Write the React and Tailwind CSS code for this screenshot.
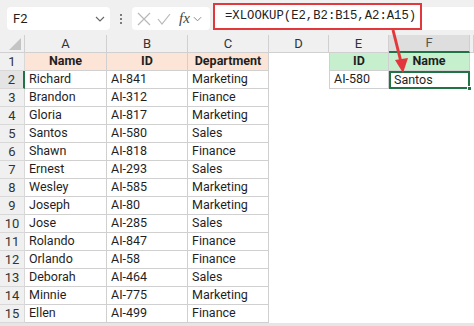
import React from "react";

const rows = [
  ["Richard", "AI-841", "Marketing"],
  ["Brandon", "AI-312", "Finance"],
  ["Gloria", "AI-817", "Marketing"],
  ["Santos", "AI-580", "Sales"],
  ["Shawn", "AI-818", "Finance"],
  ["Ernest", "AI-293", "Sales"],
  ["Wesley", "AI-585", "Marketing"],
  ["Joseph", "AI-80", "Marketing"],
  ["Jose", "AI-285", "Sales"],
  ["Rolando", "AI-847", "Finance"],
  ["Orlando", "AI-58", "Finance"],
  ["Deborah", "AI-464", "Sales"],
  ["Minnie", "AI-775", "Marketing"],
  ["Ellen", "AI-499", "Finance"],
];

const cols = ["A", "B", "C", "D", "E", "F", ""];

export default function App() {
  return (
    <div
      className="relative w-[474px] h-[326px] overflow-hidden bg-white text-[#1f1f1f]"
      style={{ fontFamily: "Roboto, 'Noto Sans', sans-serif" }}
    >
      {/* formula bar */}
      <div className="h-[35px] bg-[#f0f0f0] flex items-start pt-[7px] pl-[7px]">
        <div className="w-[103px] h-[23px] bg-white rounded-[4px] flex items-center justify-between pl-[6px] pr-[5px] text-[13px]">
          <span>F2</span>
          <svg width="10" height="6" viewBox="0 0 10 6"><path d="M1 1 L5 5 L9 1" fill="none" stroke="#666" strokeWidth="1.1" /></svg>
        </div>
        <div className="w-[22px] h-[23px] flex flex-col items-center justify-center gap-[2px]">
          <span className="w-[2px] h-[2px] bg-[#555] rounded-full" />
          <span className="w-[2px] h-[2px] bg-[#555] rounded-full" />
          <span className="w-[2px] h-[2px] bg-[#555] rounded-full" />
        </div>
        <div className="w-[78px] h-[23px] bg-white rounded-[4px] flex items-center pl-[5px]">
          <svg width="14" height="14" viewBox="0 0 14 14" className="mr-[6px]"><path d="M1 1 L13 13 M13 1 L1 13" stroke="#b8b8b8" strokeWidth="1.2" /></svg>
          <svg width="14" height="12" viewBox="0 0 14 12" className="mr-[8px]"><path d="M1 6 L5 11 L13 1" fill="none" stroke="#b8b8b8" strokeWidth="1.2" /></svg>
          <span className="text-[15px] italic text-[#444] mr-[3px]" style={{ fontFamily: "'Liberation Serif', serif" }}>fx</span>
          <svg width="9" height="6" viewBox="0 0 10 6"><path d="M1 1 L5 5 L9 1" fill="none" stroke="#888" strokeWidth="1.1" /></svg>
        </div>
        <div className="ml-[3px] -mt-[4px] h-[27px] w-[209px] bg-white border-2 border-[#e2383c] flex items-center pl-[10px] text-[12.25px] text-[#222]"
          style={{ fontFamily: "'Liberation Mono', monospace" }}>
          =XLOOKUP(E2,B2:B15,A2:A15)
        </div>
        <div className="flex-1 h-[23px] bg-white" />
      </div>

      {/* grid */}
      <div
        className="grid text-[12.5px]"
        style={{ gridTemplateColumns: "25px 82px 81px 81px 60px 60px 81px 4px", gridAutoRows: "18px" }}
      >
        {/* column headers */}
        <div className="relative bg-[#f0f0f0] border-b border-r border-[#d0d0d0]">
          <svg width="12" height="12" viewBox="0 0 12 12" className="absolute right-[3px] bottom-[2px]"><path d="M12 0 L12 12 L0 12 Z" fill="#c4c4c4" /></svg>
        </div>
        {cols.map((c, i) => (
          <div
            key={i}
            className={
              c === "F"
                ? "bg-[#dedede] border-b-2 border-b-[#217346] border-r border-r-[#d0d0d0] flex items-center justify-center text-[13px] text-[#555]"
                : "bg-[#f0f0f0] border-b border-r border-[#d0d0d0] flex items-center justify-center text-[13px] text-[#333]"
            }
          >
            {c}
          </div>
        ))}

        {/* row 1 */}
        <div className="bg-[#f0f0f0] border-r border-b border-[#d8d8d8] flex items-center justify-center text-[13px] text-[#333]">1</div>
        <div className="bg-[#fce4d6] border-r border-b border-[#d0d0d0] flex items-center justify-center font-bold">Name</div>
        <div className="bg-[#fce4d6] border-r border-b border-[#d0d0d0] flex items-center justify-center font-bold">ID</div>
        <div className="bg-[#fce4d6] border-r border-b border-[#d0d0d0] flex items-center justify-center font-bold">Department</div>
        <div className="bg-white" />
        <div className="bg-[#c6efce] border-l border-r border-b border-[#d0d0d0] flex items-center justify-center font-bold">ID</div>
        <div className="bg-[#c6efce] border-r border-b border-[#d0d0d0] flex items-center justify-center font-bold">Name</div>
        <div className="bg-white" />

        {rows.map((r, i) => {
          const n = i + 2;
          return (
            <React.Fragment key={n}>
              <div
                className={
                  n === 2
                    ? "bg-[#e4e4e4] border-r-2 border-r-[#217346] border-b border-b-[#d8d8d8] flex items-center justify-center text-[13px] text-[#333]"
                    : "bg-[#f0f0f0] border-r border-b border-[#d8d8d8] flex items-center justify-center text-[13px] text-[#333]"
                }
              >
                {n}
              </div>
              <div className="border-r border-b border-[#d0d0d0] flex items-center pl-[4px] whitespace-nowrap">{r[0]}</div>
              <div className="border-r border-b border-[#d0d0d0] flex items-center pl-[4px] whitespace-nowrap">{r[1]}</div>
              <div className="border-r border-b border-[#d0d0d0] flex items-center pl-[4px] whitespace-nowrap">{r[2]}</div>
              <div />
              {n === 2 ? (
                <>
                  <div className="border-l border-r border-b border-[#d0d0d0] flex items-center pl-[4px]">AI-580</div>
                  <div className="relative border-2 border-[#217346] flex items-center pl-[3px]">
                    Santos
                    <span className="absolute -right-[4px] -bottom-[4px] w-[5px] h-[5px] bg-[#217346] border border-white" />
                  </div>
                </>
              ) : (
                <>
                  <div />
                  <div />
                </>
              )}
              <div />
            </React.Fragment>
          );
        })}
      </div>
      <div className="h-[4px] bg-[#e6e6e6]" />

      {/* red arrow */}
      <svg className="absolute left-0 top-0 pointer-events-none" width="474" height="326">
        <line x1="393" y1="30" x2="401" y2="62" stroke="#e2383c" strokeWidth="3" />
        <path d="M395 60 L403 73 L408 58 Z" fill="#e2383c" />
      </svg>
    </div>
  );
}
